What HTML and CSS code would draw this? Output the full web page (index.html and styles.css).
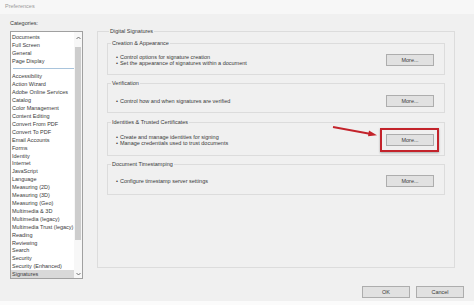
FILE: index.html
```html
<!DOCTYPE html>
<html lang="en">
<head>
    <meta charset="UTF-8">
    <title>Preferences</title>
    <link rel="stylesheet" href="styles.css">
</head>
<body>
    <div class="dialog">
        <div class="titlebar">Preferences</div>

        <div class="main">
            <div class="categories">
                <div class="cat-label">Categories:</div>
                <div class="listbox">
                    <ul class="items">
                        <li>Documents</li>
                        <li>Full Screen</li>
                        <li>General</li>
                        <li>Page Display</li>
                        <li class="sep"><span></span></li>
                        <li>Accessibility</li>
                        <li>Action Wizard</li>
                        <li>Adobe Online Services</li>
                        <li>Catalog</li>
                        <li>Color Management</li>
                        <li>Content Editing</li>
                        <li>Convert From PDF</li>
                        <li>Convert To PDF</li>
                        <li>Email Accounts</li>
                        <li>Forms</li>
                        <li>Identity</li>
                        <li>Internet</li>
                        <li>JavaScript</li>
                        <li>Language</li>
                        <li>Measuring (2D)</li>
                        <li>Measuring (3D)</li>
                        <li>Measuring (Geo)</li>
                        <li>Multimedia &amp; 3D</li>
                        <li>Multimedia (legacy)</li>
                        <li>Multimedia Trust (legacy)</li>
                        <li>Reading</li>
                        <li>Reviewing</li>
                        <li>Search</li>
                        <li>Security</li>
                        <li>Security (Enhanced)</li>
                        <li class="selected">Signatures</li>
                    </ul>
                    <div class="scrollbar">
                        <svg class="arrow" width="7" height="8" viewBox="0 0 7 8"><path d="M1.5 5 L3.5 3 L5.5 5" fill="none" stroke="#606060" stroke-width="0.9"/></svg>
                        <div class="track"><div class="thumb"></div></div>
                        <svg class="arrow" width="7" height="8" viewBox="0 0 7 8"><path d="M1.5 3 L3.5 5 L5.5 3" fill="none" stroke="#606060" stroke-width="0.9"/></svg>
                    </div>
                </div>
            </div>

            <div class="group">
                <div class="box-title">Digital Signatures</div>

                <div class="section s-create">
                    <div class="box-title">Creation &amp; Appearance</div>
                    <div class="row">
                        <ul class="bullets">
                            <li>Control options for signature creation</li>
                            <li>Set the appearance of signatures within a document</li>
                        </ul>
                        <button class="btn">More...</button>
                    </div>
                </div>

                <div class="section s-verify">
                    <div class="box-title">Verification</div>
                    <div class="row">
                        <ul class="bullets">
                            <li>Control how and when signatures are verified</li>
                        </ul>
                        <button class="btn">More...</button>
                    </div>
                </div>

                <div class="section s-ident">
                    <div class="box-title">Identities &amp; Trusted Certificates</div>
                    <div class="row">
                        <ul class="bullets">
                            <li>Create and manage identities for signing</li>
                            <li>Manage credentials used to trust documents</li>
                        </ul>
                        <div class="highlight"><button class="btn">More...</button></div>
                    </div>
                </div>

                <div class="section s-stamp">
                    <div class="box-title">Document Timestamping</div>
                    <div class="row">
                        <ul class="bullets">
                            <li>Configure timestamp server settings</li>
                        </ul>
                        <button class="btn">More...</button>
                    </div>
                </div>
            </div>
        </div>

        <div class="footer">
            <button class="btn">OK</button>
            <button class="btn">Cancel</button>
        </div>
        <div class="bottom-strip"></div>

        <svg class="pointer" width="50" height="16" viewBox="0 0 50 16">
            <line x1="2" y1="3" x2="40" y2="10" stroke="#c3232b" stroke-width="1.8"/>
            <path d="M38 6.5 L46 11.3 L37 12.3 Z" fill="#c3232b"/>
        </svg>
    </div>
</body>
</html>
```

FILE: styles.css
```css
:root {
    --bg: #f0f0f0;
    --line: #dcdcdc;
    --text: #3a3a3a;
    --btn: #e1e1e1;
    --btn-border: #adadad;
    --red: #c3232b;
}

body {
    margin: 0;
    font-family: 'Liberation Sans', Arial, sans-serif;
    font-size: 5.5px;
    color: var(--text);
    background: var(--bg);
}

.dialog {
    position: relative;
    width: 474px;
    height: 305px;
    display: flex;
    flex-direction: column;
    overflow: hidden;
}

.titlebar {
    flex: none;
    height: 14px;
    line-height: 12px;
    padding-left: 5px;
    color: #9a9a9a;
    background: #f7f7f7;
    box-sizing: border-box;
}

.main {
    flex: none;
    display: flex;
    align-items: flex-start;
    padding: 5px 0 0 10px;
}

.cat-label {
    line-height: 8px;
    margin-bottom: 4px;
}

.listbox {
    width: 73px;
    height: 248px;
    box-sizing: border-box;
    border: 1px solid #a0a0a0;
    background: white;
    display: flex;
}

.items {
    flex: 1;
    display: flex;
    flex-direction: column;
    list-style: none;
    margin: 0;
    padding: 1px 0 0;
    overflow: hidden;
}

.items li {
    flex: 1 1 0;
    min-height: 0;
    display: flex;
    align-items: center;
    padding-left: 1px;
    white-space: nowrap;
}

.items li.sep {
    padding-left: 2px;
}

.items li.sep span {
    flex: 1;
    height: 1px;
    background: #a9c4dc;
}

.items li.selected {
    background: #d9d9d9;
}

.scrollbar {
    width: 8px;
    display: flex;
    flex-direction: column;
    align-items: center;
    background: #f7f7f7;
}

.arrow {
    margin-top: 2px;
    flex: none;
}

.track {
    flex: 1;
    width: 100%;
    padding: 5px 1px 28px;
    box-sizing: border-box;
}

.thumb {
    height: 100%;
    background: #cdcdcd;
}

.group {
    width: 358px;
    height: 237px;
    box-sizing: border-box;
    margin: 12px 0 0 14px;
    padding: 0 9px;
    border: 1px solid var(--line);
}

.box-title {
    width: fit-content;
    line-height: 8px;
    margin: -5px 0 0 2px;
    padding: 0 1px;
    background: var(--bg);
}

.section {
    padding: 0 10px 0 8px;
    border: 1px solid var(--line);
}

.section .box-title {
    margin-left: -5px;
}

.s-create {
    margin-top: 8px;
}

.s-create .row {
    padding: 7px 0 8px;
}

.s-verify {
    margin-top: 8px;
}

.s-verify .row {
    padding: 8px 0 5px;
}

.s-ident {
    margin-top: 9px;
}

.s-ident .row {
    padding: 2px 0 3px;
}

.s-stamp {
    margin-top: 8px;
}

.s-stamp .row {
    padding: 7px 0 7px;
}

.row {
    display: flex;
    align-items: center;
    justify-content: space-between;
}

.bullets {
    list-style: none;
    margin: 0;
    padding: 0;
}

.bullets li {
    line-height: 6px;
}

.bullets li::before {
    content: "\2022";
    margin-right: 2px;
}

.btn {
    width: 48px;
    height: 12px;
    padding: 0;
    font-family: inherit;
    font-size: 5.5px;
    color: var(--text);
    background: var(--btn);
    border: 1px solid var(--btn-border);
    border-radius: 0;
}

.highlight {
    display: flex;
    padding: 4px 3px 4px 4px;
    margin-right: -5px;
    border: 2px solid var(--red);
    box-shadow: 0 1px 2px rgba(0, 0, 0, 0.3);
}

.footer {
    flex: none;
    display: flex;
    justify-content: flex-end;
    gap: 6px;
    padding: 7px 10px 0 0;
}

.bottom-strip {
    margin-top: auto;
    height: 4px;
    background: #fbfbfb;
}

.pointer {
    position: absolute;
    left: 331px;
    top: 124px;
}
```
